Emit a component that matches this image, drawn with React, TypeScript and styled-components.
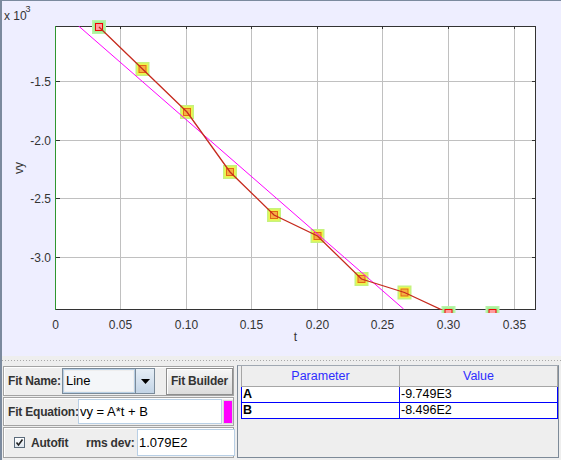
import React from "react";
import styled, { createGlobalStyle } from "styled-components";

const GlobalStyle = createGlobalStyle`
	html, body {
		margin: 0;
		padding: 0;
		background: #eeeeee;
	}
	body {
		font-family: "Liberation Sans", Arial, sans-serif;
		font-size: 12px;
		color: #333333;
	}
`;

// plot mapping measured from the reference
const gridX = [
	{ x: 55.5, label: "0" },
	{ x: 120.5, label: "0.05" },
	{ x: 186.5, label: "0.10" },
	{ x: 251.5, label: "0.15" },
	{ x: 317.5, label: "0.20" },
	{ x: 382.5, label: "0.25" },
	{ x: 448.5, label: "0.30" },
	{ x: 514.5, label: "0.35" },
];
const gridY = [
	{ y: 81.5, label: "-1.5" },
	{ y: 140.5, label: "-2.0" },
	{ y: 198.5, label: "-2.5" },
	{ y: 257.5, label: "-3.0" },
];
const points: { x: number; y: number; out?: boolean }[] = [
	{ x: 99, y: 27, out: true },
	{ x: 142.5, y: 69 },
	{ x: 187, y: 112 },
	{ x: 230, y: 172 },
	{ x: 274, y: 215 },
	{ x: 317.5, y: 236 },
	{ x: 361.5, y: 279 },
	{ x: 404.5, y: 292.5 },
	{ x: 448.5, y: 313, out: true },
	{ x: 492.5, y: 313, out: true },
];

const params = [
	{ name: "A", value: "-9.749E3" },
	{ name: "B", value: "-8.496E2" },
];

const Frame = styled.div`
	width: 561px;
	height: 460px;
	box-sizing: border-box;
	border-left: 2px solid #7b8a9e;
	border-top: 1px solid #7b8a9e;
	background: #eeeeee;
	display: flex;
	flex-direction: column;
	overflow: hidden;
`;

const PlotPanel = styled.div`
	height: 355px;
	flex: none;
	background: #eeeeff;
	svg {
		display: block;
	}
`;

const Divider = styled.div`
	height: 8px;
	flex: none;
	display: flex;
	align-items: center;
	&::before {
		content: "";
		display: block;
		width: 100%;
		height: 1px;
		background: repeating-linear-gradient(90deg, #a8a8a8 0 1px, transparent 1px 3px);
	}
`;

const Bottom = styled.div`
	flex: 1;
	display: flex;
	padding-top: 2px;
`;

const LeftCol = styled.div`
	width: 231px;
	margin-left: 1px;
	display: flex;
	flex-direction: column;
	gap: 1px;
`;

const Row = styled.div<{ $h: number }>`
	height: ${(p) => p.$h}px;
	box-sizing: border-box;
	border: 1px solid #a3a3a3;
	box-shadow: inset 1px 1px 0 #ffffff;
	display: flex;
	align-items: center;
	padding-left: 3px;
`;

const Label = styled.span<{ $w?: number; $ml?: number }>`
	font-weight: bold;
	color: #333333;
	letter-spacing: -0.2px;
	white-space: nowrap;
	width: ${(p) => (p.$w ? `${p.$w}px` : "auto")};
	margin-left: ${(p) => p.$ml ?? 0}px;
	flex: none;
`;

const Combo = styled.div`
	width: 93px;
	height: 26px;
	box-sizing: border-box;
	border: 1px solid #7a8a99;
	display: flex;
	flex: none;
`;

const ComboText = styled.div`
	flex: 1;
	box-shadow: inset 0 0 0 1px #b8cfe5, inset 0 0 0 2px #eeeeee;
	background: #f4f6f9;
	padding: 4px 0 0 3px;
	color: #000;
	font-size: 13px;
`;

const ComboArrow = styled.div`
	width: 18px;
	border-left: 1px solid #7a8a99;
	background: linear-gradient(#e6eef6, #c3d4e6);
	display: flex;
	align-items: center;
	justify-content: center;
`;

const Button = styled.div`
	width: 67px;
	height: 27px;
	margin-left: 11px;
	box-sizing: border-box;
	border: 1px solid #8e8e8e;
	box-shadow: inset 1px 1px 0 #ffffff;
	background: linear-gradient(#f6f6f6, #dcdcdc);
	font-weight: bold;
	letter-spacing: -0.2px;
	color: #333333;
	display: flex;
	align-items: center;
	justify-content: center;
	flex: none;
`;

const Field = styled.div<{ $w: number; $h: number }>`
	width: ${(p) => p.$w}px;
	height: ${(p) => p.$h}px;
	box-sizing: border-box;
	border: 1px solid #b8cfe5;
	background: #ffffff;
	color: #000;
	font-size: 13px;
	padding-left: 1px;
	display: flex;
	align-items: center;
	flex: none;
`;

const Swatch = styled.div`
	width: 10px;
	height: 24px;
	margin-left: 1px;
	box-sizing: border-box;
	background: #ff00ff;
	border: 1px solid #d8d8d8;
	flex: none;
`;

const Check = styled.div`
	width: 11px;
	height: 11px;
	margin-left: 7px;
	box-sizing: border-box;
	border: 1px solid #5b6b7b;
	background: linear-gradient(#ffffff, #dde6ef);
	display: flex;
	align-items: center;
	justify-content: center;
	flex: none;
`;

const RightPanel = styled.div`
	width: 322px;
	height: 93px;
	margin-left: 3px;
	margin-top: -1px;
	box-sizing: border-box;
	border: 1px solid #7d8a98;
	border-top-color: #a0a8b2;
	padding-left: 3px;
	background: #eeeeee;
`;

const Table = styled.table`
	border-collapse: collapse;
	width: 317px;
	table-layout: fixed;
	font-size: 12.5px;
	th {
		height: 20px;
		padding: 0;
		font-weight: normal;
		color: #2d2dff;
		background: #eeeeee;
		border: 1px solid #a6a6a6;
		border-top: none;
		text-align: center;
	}
	td {
		height: 15px;
		padding: 0 0 0 1px;
		background: #ffffff;
		color: #000000;
		border: 1px solid #0000ff;
		line-height: 15px;
	}
	td:first-child {
		font-weight: bold;
	}
`;

const Chart = () => (
	<svg width={559} height={355} viewBox="2 1 559 355" fontFamily="'Liberation Sans', Arial, sans-serif">
		<defs>
			<clipPath id="plotClip">
				<rect x={55} y={26} width={481} height={284} />
			</clipPath>
			<clipPath id="markClip">
				<rect x={0} y={0} width={561} height={313} />
			</clipPath>
		</defs>
		<rect x={55} y={26} width={481} height={284} fill="#ffffff" />
		{gridX.slice(1).map((g) => (
			<line key={g.x} x1={g.x} x2={g.x} y1={26} y2={309} stroke="#c0c0c0" />
		))}
		{gridY.map((g) => (
			<line key={g.y} x1={55} x2={535} y1={g.y} y2={g.y} stroke="#c0c0c0" />
		))}
		{gridX.slice(1).map((g) => (
			<line key={"t" + g.x} x1={g.x} x2={g.x} y1={26} y2={29} stroke="#333" />
		))}
		{gridY.map((g) => (
			<React.Fragment key={"k" + g.y}>
				<line x1={56} x2={60} y1={g.y} y2={g.y} stroke="#333" />
				<line x1={532} x2={535} y1={g.y} y2={g.y} stroke="#333" />
			</React.Fragment>
		))}
		<rect x={55.5} y={26.5} width={480} height={283} fill="none" stroke="#333333" />
		<line x1={55.5} x2={55.5} y1={26} y2={310} stroke="#2f962f" />

		<g clipPath="url(#markClip)">
			{points.map((p, i) => (
				<g key={i}>
					<rect x={p.x - 7} y={p.y - 7} width={14} height={14} fill={p.out ? "#b8f5a8" : "#c6f37e"} />
					<rect x={p.x - 5.5} y={p.y - 5.5} width={11} height={11} fill={p.out ? "#a4ee94" : "#eef54a"} />
					<rect
						x={p.x - 3.5}
						y={p.y - 3.5}
						width={7}
						height={7}
						fill={p.out ? "#ff9c9c" : "#f6b040"}
						stroke={p.out ? "#ee0000" : "#e06818"}
						strokeWidth={1}
					/>
				</g>
			))}
		</g>
		<g clipPath="url(#plotClip)">
			<line x1={78.6} y1={26} x2={403.6} y2={309} stroke="#ff00ff" strokeWidth={1} />
			<polyline
				points={points.map((p) => `${p.x},${p.y}`).join(" ")}
				fill="none"
				stroke="#c62a1e"
				strokeWidth={1.3}
			/>
		</g>

		<g fontSize={12} fill="#333333">
			{gridY.map((g) => (
				<text key={"l" + g.y} x={51} y={g.y + 4} textAnchor="end">
					{g.label}
				</text>
			))}
			{gridX.map((g) => (
				<text key={"b" + g.x} x={g.x} y={329} textAnchor="middle">
					{g.label}
				</text>
			))}
			<text x={4} y={20}>
				x 10
			</text>
			<text x={25.5} y={12} fontSize={9}>
				3
			</text>
			<text x={23} y={168} textAnchor="middle" transform="rotate(-90 23 168)">
				vy
			</text>
			<text x={295.5} y={341} textAnchor="middle">
				t
			</text>
		</g>
	</svg>
);

export default function App() {
	return (
		<>
			<GlobalStyle />
			<Frame>
				<PlotPanel>
					<Chart />
				</PlotPanel>
				<Divider />
				<Bottom>
					<LeftCol>
						<Row $h={30}>
							<Label $w={54} $ml={1}>Fit Name:</Label>
							<Combo>
								<ComboText>Line</ComboText>
								<ComboArrow>
									<svg width={9} height={5} viewBox="0 0 9 5">
										<path d="M0 0h9L4.5 5z" fill="#000" />
									</svg>
								</ComboArrow>
							</Combo>
							<Button>Fit Builder</Button>
						</Row>
						<Row $h={29}>
							<Label $w={70} $ml={1}>Fit Equation:</Label>
							<Field $w={144} $h={25}>vy = A*t + B</Field>
							<Swatch />
						</Row>
						<Row $h={31}>
							<Check>
								<svg width={9} height={9} viewBox="0 0 9 9">
									<path d="M1.5 4.5l2 2.5 4-5.5" fill="none" stroke="#222" strokeWidth={1.6} />
								</svg>
							</Check>
							<Label $w={55} $ml={6}>Autofit</Label>
							<Label $w={51}>rms dev:</Label>
							<Field $w={98} $h={27}>1.079E2</Field>
						</Row>
					</LeftCol>
					<RightPanel>
						<Table>
							<thead>
								<tr>
									<th>Parameter</th>
									<th>Value</th>
								</tr>
							</thead>
							<tbody>
								{params.map((p) => (
									<tr key={p.name}>
										<td>{p.name}</td>
										<td>{p.value}</td>
									</tr>
								))}
							</tbody>
						</Table>
					</RightPanel>
				</Bottom>
			</Frame>
		</>
	);
}
